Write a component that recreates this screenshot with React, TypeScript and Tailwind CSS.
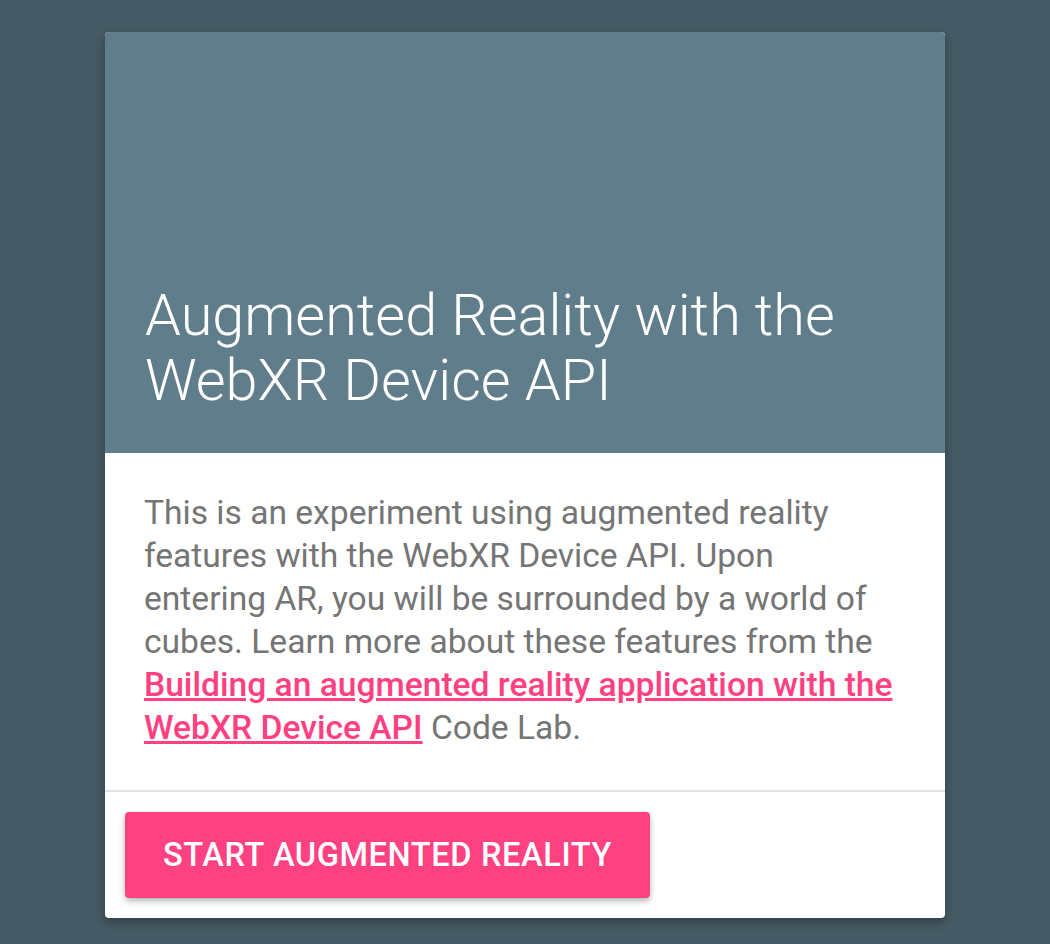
export default function App() {
  return (
    <div className="min-h-screen bg-[#455a64] pt-8 font-['Roboto',sans-serif]">
      <div className="mx-auto w-[840px] overflow-hidden rounded-[4px] bg-white shadow-[0_4px_10px_rgba(0,0,0,0.3)]">
        <div className="flex h-[421px] items-end bg-[#607d8b] px-10 pb-10">
          <h1 className="text-[57.6px] font-light leading-[65px] text-white">
            Augmented Reality with the WebXR Device API
          </h1>
        </div>
        <div className="pl-[39px] pr-[48px] pt-[38px] pb-[41px] text-[33.6px] leading-[43px] text-[#757575]">
          This is an experiment using augmented reality features with the WebXR Device API. Upon
          entering AR, you will be surrounded by a world of cubes. Learn more about these features
          from the{' '}
          <a href="#" className="font-medium text-[#ff4081] underline">
            Building an augmented reality application with the WebXR Device API
          </a>{' '}
          Code Lab.
        </div>
        <div className="border-t-2 border-[#e3e3e3] px-5 pt-5 pb-5">
          <button className="h-[86px] rounded-[4px] bg-[#ff4081] px-[38px] text-[32.6px] font-medium tracking-[0.6px] text-white uppercase shadow-[0_3px_6px_rgba(0,0,0,0.3)]">
            Start Augmented Reality
          </button>
        </div>
      </div>
    </div>
  )
}
